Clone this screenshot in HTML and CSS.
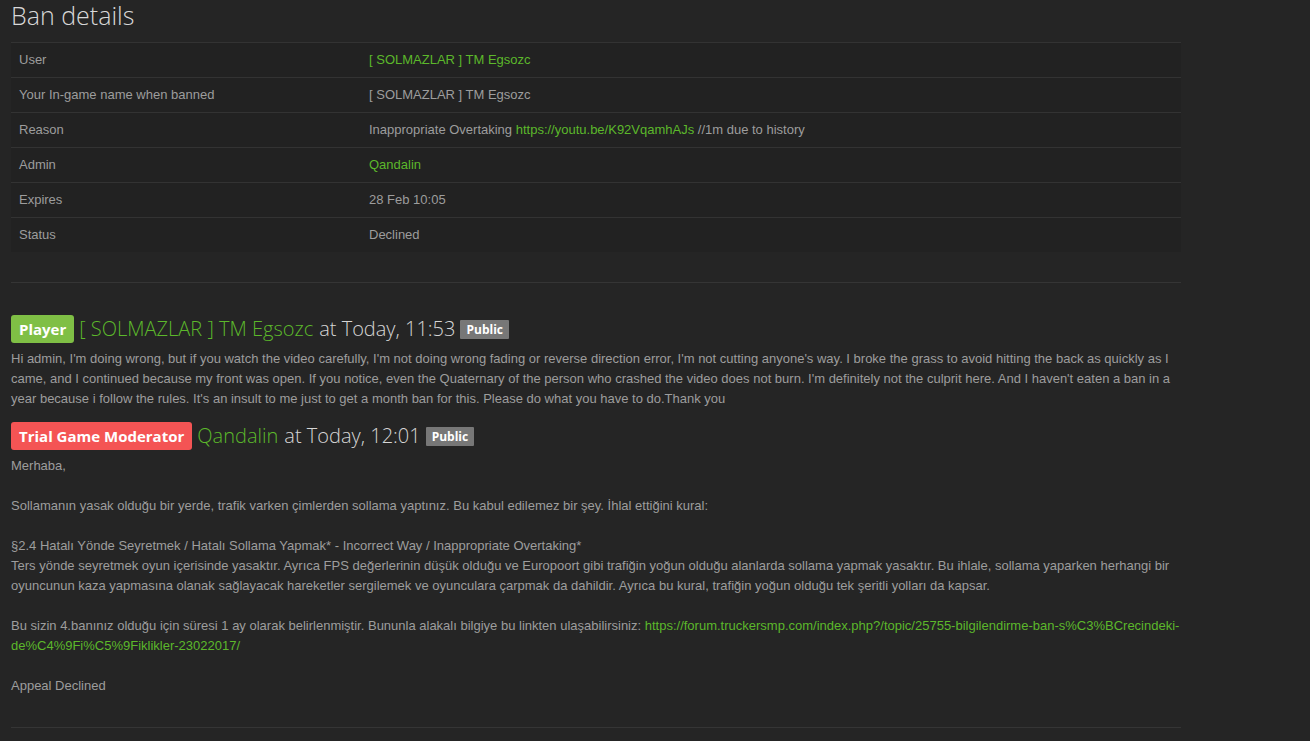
FILE: index.html
```html
<!DOCTYPE html>
<html>
<head>
<meta charset="utf-8">
<title>Ban details</title>
<link rel="stylesheet" href="styles.css">
</head>
<body>
<div class="container">
  <h1 class="title">Ban details</h1>
  <table class="details">
    <tbody>
      <tr><td class="label">User</td><td><a class="link" href="#">[ SOLMAZLAR ] TM Egsozc</a></td></tr>
      <tr><td class="label">Your In-game name when banned</td><td>[ SOLMAZLAR ] TM Egsozc</td></tr>
      <tr><td class="label">Reason</td><td>Inappropriate Overtaking <a class="link" href="#">https://youtu.be/K92VqamhAJs</a> //1m due to history</td></tr>
      <tr><td class="label">Admin</td><td><a class="link" href="#">Qandalin</a></td></tr>
      <tr><td class="label">Expires</td><td>28 Feb 10:05</td></tr>
      <tr><td class="label">Status</td><td>Declined</td></tr>
    </tbody>
  </table>
  <hr class="sep sep-top">

  <div class="comment">
    <h4 class="comment-head">
      <span class="badge badge-player">Player</span>
      <span class="name">[ SOLMAZLAR ] TM Egsozc</span>
      <span class="when">at Today, 11:53</span>
      <span class="public">Public</span>
    </h4>
    <p class="comment-body">Hi admin, I'm doing wrong, but if you watch the video carefully, I'm not doing wrong fading or reverse direction error, I'm not cutting anyone's way. I broke the grass to avoid hitting the back as quickly as I came, and I continued because my front was open. If you notice, even the Quaternary of the person who crashed the video does not burn. I'm definitely not the culprit here. And I haven't eaten a ban in a year because i follow the rules. It's an insult to me just to get a month ban for this. Please do what you have to do.Thank you</p>
  </div>

  <div class="comment">
    <h4 class="comment-head">
      <span class="badge badge-mod">Trial Game Moderator</span>
      <span class="name">Qandalin</span>
      <span class="when">at Today, 12:01</span>
      <span class="public">Public</span>
    </h4>
    <p class="comment-body">Merhaba,<br><br>Sollamanın yasak olduğu bir yerde, trafik varken çimlerden sollama yaptınız. Bu kabul edilemez bir şey. İhlal ettiğini kural:<br><br>§2.4 Hatalı Yönde Seyretmek / Hatalı Sollama Yapmak* - Incorrect Way / Inappropriate Overtaking*<br>Ters yönde seyretmek oyun içerisinde yasaktır. Ayrıca FPS değerlerinin düşük olduğu ve Europoort gibi trafiğin yoğun olduğu alanlarda sollama yapmak yasaktır. Bu ihlale, sollama yaparken herhangi bir oyuncunun kaza yapmasına olanak sağlayacak hareketler sergilemek ve oyunculara çarpmak da dahildir. Ayrıca bu kural, trafiğin yoğun olduğu tek şeritli yolları da kapsar.<br><br>Bu sizin 4.banınız olduğu için süresi 1 ay olarak belirlenmiştir. Bununla alakalı bilgiye bu linkten ulaşabilirsiniz: <a class="link" href="#">https://forum.truckersmp.com/index.php?/topic/25755-bilgilendirme-ban-s%C3%BCrecindeki-de%C4%9Fi%C5%9Fiklikler-23022017/</a><br><br>Appeal Declined</p>
  </div>
  <hr class="sep sep-bottom">
</div>
</body>
</html>
```

FILE: styles.css
```css
html, body {
  margin: 0;
  padding: 0;
  background: #252525;
}
body {
  font-family: "Liberation Sans", Arial, sans-serif;
  font-size: 13px;
  line-height: 20px;
  color: #9d9d9d;
}
.container {
  width: 1170px;
  margin-left: 11px;
}
.title {
  font-family: "Open Sans", sans-serif;
  font-weight: 300;
  font-size: 25px;
  line-height: 30px;
  color: #d8d8d8;
  margin: 0 0 12px 0;
}
.details {
  width: 100%;
  border-collapse: collapse;
  background: #222222;
}
.details td {
  padding: 8px;
  line-height: 18px;
  border-top: 1px solid #333333;
  vertical-align: top;
}
.details td.label {
  width: 334px;
}
.link {
  color: #5cb82b;
  text-decoration: none;
}
.sep {
  border: 0;
  border-top: 1px solid #353535;
  margin: 0;
  height: 0;
}
.sep-top {
  margin-top: 30px;
  margin-bottom: 32px;
}
.sep-bottom {
  margin-top: 31px;
}
.comment {
  margin-bottom: 13px;
}
.comment-head {
  display: flex;
  align-items: center;
  margin: 0 0 6px 0;
  font-family: "Open Sans", sans-serif;
  font-weight: 300;
  font-size: 20px;
  line-height: 28px;
}
.badge {
  display: inline-block;
  font-family: "Open Sans", sans-serif;
  font-weight: 700;
  font-size: 15px;
  line-height: 20px;
  padding: 4px 8px;
  border-radius: 3px;
  color: #ffffff;
  margin-right: 5px;
}
.badge-player {
  background: #7fbf45;
}
.badge-mod {
  background: #f45454;
}
.name {
  color: #5cb82b;
  margin-right: 6px;
}
.when {
  color: #d6d6d6;
  margin-right: 5px;
}
.public {
  display: inline-block;
  font-family: "Open Sans", sans-serif;
  font-weight: 700;
  font-size: 12px;
  line-height: 19px;
  padding: 0 6px;
  background: #777777;
  color: #ffffff;
  border-radius: 1px;
}
.comment-body {
  margin: 0;
}
```
